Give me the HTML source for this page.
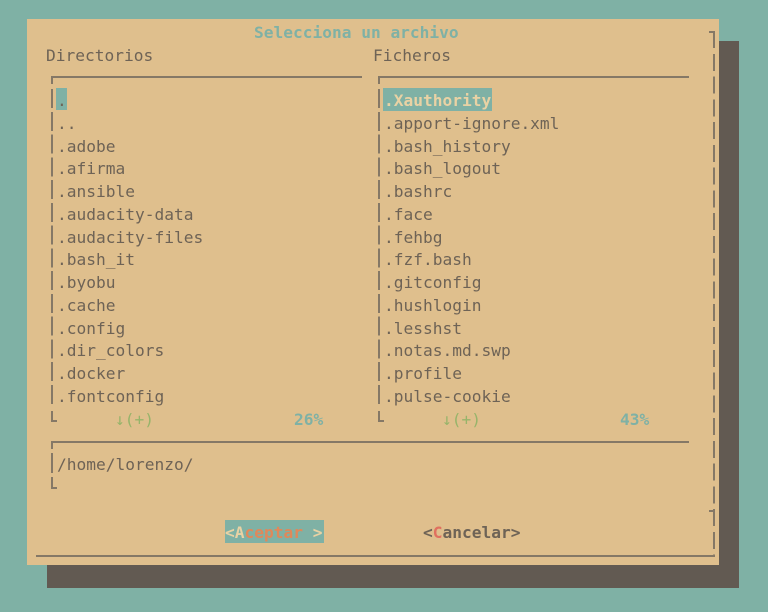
<!DOCTYPE html>
<html><head><meta charset="utf-8">
<style>
html,body{margin:0;padding:0}
body{width:768px;height:612px;background:#7fb1a5;position:relative;overflow:hidden;
font-family:"DejaVu Sans Mono","Liberation Mono",monospace;font-size:16.2px;color:#6e6356}
.a{position:absolute;white-space:pre;line-height:22px;height:22px}
.ln{position:absolute;background:#857866}
.vd{position:absolute;width:2px;background:repeating-linear-gradient(#857866 0 19px,transparent 19px 22.77px)}
#dlg{position:absolute;left:27px;top:19px;width:692px;height:546px;background:#dfbf8d}
#sh1{position:absolute;left:719px;top:41px;width:20px;height:547px;background:#625a52}
#sh2{position:absolute;left:47px;top:565px;width:692px;height:23px;background:#625a52}
.b{font-weight:bold}
</style></head><body>
<div id="sh1"></div><div id="sh2"></div>
<div id="dlg"></div>

<div class="a b" style="left:254px;top:22px;color:#7fb1a5">Selecciona un archivo</div>
<div class="a" style="left:46px;top:45px">Directorios</div>
<div class="a" style="left:373px;top:45px">Ficheros</div>

<!-- left list box -->
<div class="ln" style="left:51px;top:76px;width:311px;height:2px"></div>
<div class="ln" style="left:51px;top:76px;width:2px;height:8px"></div>
<div class="vd" style="left:51px;top:89px;height:319px"></div>
<div class="ln" style="left:51px;top:411px;width:2px;height:11px"></div>
<div class="ln" style="left:51px;top:420px;width:6px;height:2px"></div>
<!-- right list box -->
<div class="ln" style="left:378px;top:76px;width:311px;height:2px"></div>
<div class="ln" style="left:378px;top:76px;width:2px;height:8px"></div>
<div class="vd" style="left:378px;top:89px;height:319px"></div>
<div class="ln" style="left:378px;top:411px;width:2px;height:11px"></div>
<div class="ln" style="left:378px;top:420px;width:6px;height:2px"></div>

<div style="position:absolute;left:56px;top:88px;width:11px;height:22px;background:#7fb1a5"></div>
<div style="position:absolute;left:383px;top:88px;width:109px;height:23px;background:#7fb1a5"></div>

<div class="a" style="left:57px;top:90px;line-height:22.77px">.
..
.adobe
.afirma
.ansible
.audacity-data
.audacity-files
.bash_it
.byobu
.cache
.config
.dir_colors
.docker
.fontconfig</div>
<div class="a" style="left:384px;top:90px;line-height:22.77px"><span class="b" style="color:#e9d2a4">.Xauthority</span>
.apport-ignore.xml
.bash_history
.bash_logout
.bashrc
.face
.fehbg
.fzf.bash
.gitconfig
.hushlogin
.lesshst
.notas.md.swp
.profile
.pulse-cookie</div>

<div class="a" style="left:115px;top:409px;color:#97b46a">↓(+)</div>
<div class="a b" style="left:294px;top:409px;color:#7fb1a5">26%</div>
<div class="a" style="left:442px;top:409px;color:#97b46a">↓(+)</div>
<div class="a b" style="left:620px;top:409px;color:#7fb1a5">43%</div>

<!-- path box -->
<div class="ln" style="left:51px;top:441px;width:638px;height:2px"></div>
<div class="ln" style="left:51px;top:441px;width:2px;height:8px"></div>
<div class="ln" style="left:51px;top:453px;width:2px;height:20px"></div>
<div class="ln" style="left:51px;top:477px;width:2px;height:12px"></div>
<div class="ln" style="left:51px;top:487px;width:6px;height:2px"></div>
<div class="a" style="left:57px;top:454px">/home/lorenzo/</div>

<!-- buttons -->
<div style="position:absolute;left:225px;top:520px;width:99px;height:23px;background:#7fb1a5"></div>
<div class="a b" style="left:225px;top:522px;color:#e9d2a4">&lt;A<span style="color:#e0885a">ceptar</span> &gt;</div>
<div class="a b" style="left:423px;top:522px;color:#6e6356">&lt;<span style="color:#e0705f">C</span>ancelar&gt;</div>

<!-- outer dashed right border and bottom -->
<div class="ln" style="left:709px;top:31px;width:6px;height:2px"></div>
<div style="position:absolute;left:713px;top:31px;width:2px;height:525px;background:repeating-linear-gradient(#857866 0 17px,transparent 17px 22.77px)"></div>
<div class="ln" style="left:709px;top:510px;width:5px;height:2px"></div>
<div class="ln" style="left:36px;top:555px;width:679px;height:2px"></div>
</body></html>
